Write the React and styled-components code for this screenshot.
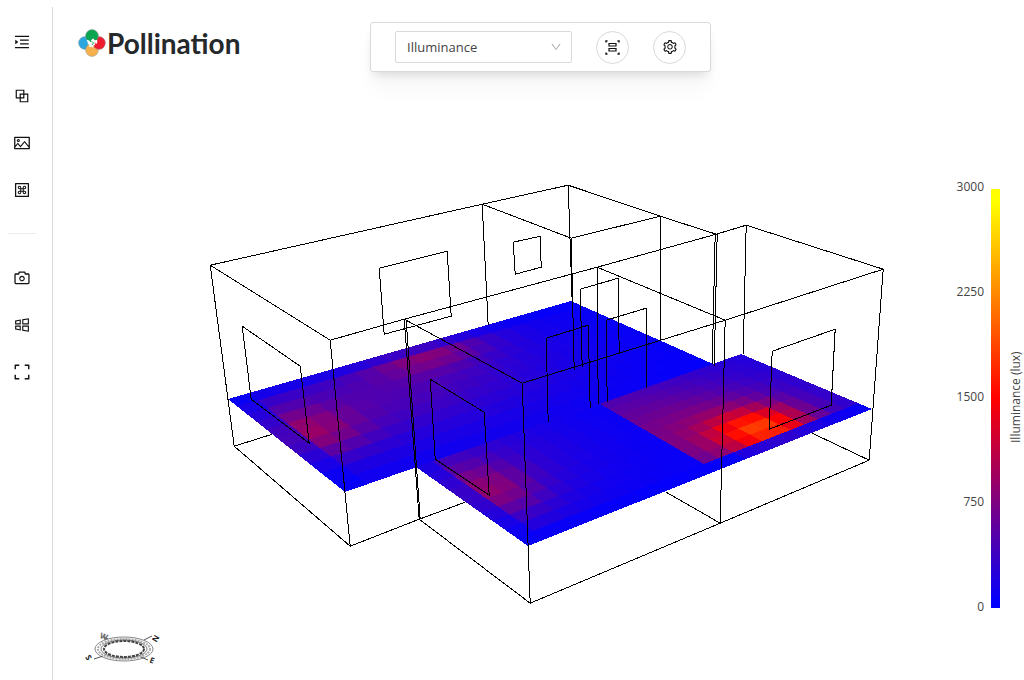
import React, { useState } from 'react';
import styled, { createGlobalStyle } from 'styled-components';
import {
	AiOutlineMenuUnfold,
	AiOutlineBlock,
	AiOutlinePicture,
	AiOutlineMacCommand,
	AiOutlineCamera,
	AiOutlineWindows,
	AiOutlineExpand,
	AiOutlineSetting,
	AiOutlineDown,
} from 'react-icons/ai';

// corners run: origin, end of u, far corner, end of v
const ROOMS = [
	{
		id: 'living',
		corners: [[228, 399], [571, 301], [713, 364], [345, 492]],
		cols: 20,
		rows: 11,
		base: (u, v) => 0.01 + 0.25 * bump(u, v, 0.22, 0.38, 0.28, 0.3),
		spots: [
			[0.38, 0.06, 0.5, 0.08, 0.17],
			[0.34, 0.49, 0.12, 0.11, 0.12],
			[0.08, 0.55, 0.3, 0.25, 0.5],
		],
		dim: (i, j) => (i === 0 ? 0.5 : 1) * (j === 0 ? 0.55 : 1),
	},
	{
		id: 'bedroom',
		corners: [[416, 467], [600, 404], [716, 471], [528, 546]],
		cols: 12,
		rows: 10,
		base: (u, v) => 0.03 + 0.22 * bump(u, v, 0.08, 0.25, 0.38, 0.38),
		spots: [[0.34, 0.14, 0.45, 0.13, 0.2]],
		dim: (i, j, rows) => (i === 0 || j === rows - 1 ? 0.45 : 1),
	},
	{
		id: 'studio',
		corners: [[600, 404], [741, 354], [872, 409], [716, 471]],
		cols: 11,
		rows: 11,
		base: (u, v) => 0.1 + 0.27 * bump(u, v, 0, 0.4, 0.5, 0.5),
		spots: [
			[0.26, 0.4, 0.72, 0.32, 0.28],
			[0.78, 0.46, 0.8, 0.17, 0.15],
		],
		dim: (i, j, rows) => (j === rows - 1 ? (i < 2 ? 0.05 : 0.22) : 1),
	},
];

const EDGES = [
	// ceilings
	'210,265 482,204 568,185 660,216 716,234',
	'210,265 330,340 404,319 597,267 716,234 746,225',
	'746,225 883,269 725,320 522,383 404,319',
	'597,267 725,320',
	'482,204 571,238 660,216',
	// corners
	'210,265 234,446',
	'330,340 350,546',
	'404,319 419,519',
	'406,320 420,519',
	'522,383 530,603',
	'725,320 720,523',
	'883,269 869,460',
	'746,225 743,354',
	'715,234 712,364',
	'717,234 714,366',
	'568,185 572,302',
	'571,238 574,370',
	'660,216 660,341',
	'482,204 488,325',
	'597,267 598,404',
	// ground
	'272,434 234,446 350,546 419,519 465,502',
	'419,519 530,603 720,523 869,460',
	'720,523 666,492',
	'869,460 812,433',
	// doors
	'548,422 546,338 588,325 590,408',
	'582,367 580,289 618,278 619,354',
	'607,402 606,320 646,308 646,388',
	// windows
	'513,242 540,236 541,267 515,274 513,242',
	'379,268 447,251 451,316 384,334 379,268',
	'242,326 300,366 309,443 251,399 242,326',
	'430,379 484,412 489,495 435,459 430,379',
	'772,351 835,329 831,405 769,429 772,351',
];

const TICKS = [3000, 2250, 1500, 750, 0];

function bump(u, v, cu, cv, su, sv) {
	return Math.exp(-(((u - cu) / su) ** 2 + ((v - cv) / sv) ** 2) / 2);
}

// 0 is blue, 1 is red, 2 is yellow
function heat(value) {
	if (value < 1) {
		const r = Math.round(255 * value);
		return `rgb(${r}, 0, ${255 - r})`;
	}
	return `rgb(255, ${Math.round(255 * Math.min(value - 1, 1))}, 0)`;
}

// maps the unit square onto a floor seen in perspective
function project([a, b, c, d]) {
	const dx1 = b[0] - c[0];
	const dx2 = d[0] - c[0];
	const dy1 = b[1] - c[1];
	const dy2 = d[1] - c[1];
	const sx = a[0] - b[0] + c[0] - d[0];
	const sy = a[1] - b[1] + c[1] - d[1];
	const det = dx1 * dy2 - dx2 * dy1;
	const g = (sx * dy2 - dx2 * sy) / det;
	const h = (dx1 * sy - sx * dy1) / det;
	return (u, v) => {
		const w = g * u + h * v + 1;
		const x = (b[0] - a[0] + g * b[0]) * u + (d[0] - a[0] + h * d[0]) * v + a[0];
		const y = (b[1] - a[1] + g * b[1]) * u + (d[1] - a[1] + h * d[1]) * v + a[1];
		return `${(x / w).toFixed(2)},${(y / w).toFixed(2)}`;
	};
}

function Floor({ room }) {
	const { corners, cols, rows, base, spots, dim } = room;
	const at = project(corners);
	const cells = [];
	for (let j = 0; j < rows; j++) {
		for (let i = 0; i < cols; i++) {
			const u = (i + 0.5) / cols;
			const v = (j + 0.5) / rows;
			let value = base(u, v);
			spots.forEach(([power, cu, cv, su, sv]) => {
				value += power * bump(u, v, cu, cv, su, sv);
			});
			cells.push(
				<polygon
					key={`${i}-${j}`}
					fill={heat(value * dim(i, j, rows))}
					points={[
						at(i / cols, j / rows),
						at((i + 1) / cols, j / rows),
						at((i + 1) / cols, (j + 1) / rows),
						at(i / cols, (j + 1) / rows),
					].join(' ')}
				/>
			);
		}
	}
	return <g>{cells}</g>;
}

function Model() {
	return (
		<Scene viewBox='53 0 971 680' role='img' aria-label='Illuminance model'>
			<g shapeRendering='crispEdges'>
				{/* closes the joint between the rooms */}
				<polygon points='417,465 704,366 704,372 417,468' fill='#1c00e3' />
				{ROOMS.map((room) => (
					<Floor key={room.id} room={room} />
				))}
			</g>
			<g
				fill='none'
				stroke='#000'
				strokeWidth='1'
				shapeRendering='crispEdges'
				transform='translate(0.2 0.2)'
			>
				{EDGES.map((points) => (
					<polyline key={points} points={points} />
				))}
			</g>
		</Scene>
	);
}

function PollinationMark() {
	return (
		<svg width='28' height='28' viewBox='0 0 28 28' aria-hidden='true'>
			<g stroke='#8d9599' strokeWidth='0.5'>
				<circle cx='7' cy='14' r='6.400' fill='#2ba6df' />
				<circle cx='14' cy='21' r='6.400' fill='#f5b04c' />
				<circle cx='21' cy='14' r='6.400' fill='#ee1c2e' />
				<circle cx='14' cy='7' r='6.400' fill='#0aa551' />
			</g>
			<path
				d='M9 11.500l2 1-.5 2 2.500-.5-.5 2M11 17.500l2-1 1.500 1 .5-2.500 2 .5M13.500 12.500l1.500-2 1 2 2.500-.5-.5 2.500'
				fill='none'
				stroke='#fff'
				strokeWidth='1.800'
				strokeLinejoin='round'
			/>
			<path d='M12 13.500l3-1.500 2 2-2 2.500-2.500-.5z' fill='#fff' />
			<path d='M14 12.500l1.500 1.500-1.500 2' fill='none' stroke='#0aa551' />
		</svg>
	);
}

function FitIcon() {
	return (
		<svg width='15' height='15' viewBox='0 0 15 15' fill='none' stroke='#111' aria-hidden='true'>
			<path d='M4 3.500h7v2.500h-7zM4 8.500h7v2.500h-7z' strokeWidth='1.200' />
			<path
				d='M1 2.500v-1.500h1.500M12.500 1h1.500v1.500M14 12.500v1.500h-1.500M2.500 14h-1.500v-1.500'
				strokeWidth='1.400'
			/>
		</svg>
	);
}

function CompassRose() {
	return (
		<Compass viewBox='0 0 84 40' role='img' aria-label='Compass'>
			<g fill='none'>
				<ellipse cx='43' cy='19' rx='29' ry='12' stroke='#888' strokeWidth='1' />
				<ellipse cx='43' cy='19' rx='26' ry='10' stroke='#aaa' strokeWidth='2' strokeDasharray='2 1' />
				<ellipse cx='43' cy='19' rx='23' ry='9' stroke='#777' strokeWidth='1' />
				<ellipse cx='43' cy='19' rx='20' ry='8' stroke='#444' strokeWidth='2' strokeDasharray='3 1' />
				<path d='M27 9l-5-2M63 10l8-4M22 26l-9 3M60 27l7 3' stroke='#555' />
			</g>
			<g fill='#222' fontSize='8' fontWeight='700' textAnchor='middle'>
				<text transform='translate(22 9) rotate(20)' fill='#666'>W</text>
				<text transform='translate(77 10) rotate(-60)'>N</text>
				<text transform='translate(5 29) rotate(60)'>S</text>
				<text transform='translate(70 33) rotate(20)'>E</text>
			</g>
		</Compass>
	);
}

export default function App() {
	const [metric, setMetric] = useState('Illuminance');

	return (
		<>
			<GlobalStyle />
			<Page>
				<Sidebar aria-label='Tools'>
					<SideButton aria-label='Expand menu' $head><AiOutlineMenuUnfold /></SideButton>
					<SideButton aria-label='Layers'><AiOutlineBlock /></SideButton>
					<SideButton aria-label='Views'><AiOutlinePicture /></SideButton>
					<SideButton aria-label='Commands'><AiOutlineMacCommand /></SideButton>
					<Divider />
					<SideButton aria-label='Screenshot'><AiOutlineCamera /></SideButton>
					<SideButton aria-label='Split view'><AiOutlineWindows /></SideButton>
					<SideButton aria-label='Full screen'><AiOutlineExpand /></SideButton>
				</Sidebar>
				<Main>
					<Model />
					<Brand href='#'>
						<PollinationMark />
						<span>Pollination</span>
					</Brand>
					<Toolbar>
						<SelectBox>
							<Select
								aria-label='Result'
								value={metric}
								onChange={(e) => setMetric(e.target.value)}
							>
								<option>Illuminance</option>
							</Select>
							<AiOutlineDown />
						</SelectBox>
						<RoundButton aria-label='Fit to view'><FitIcon /></RoundButton>
						<RoundButton aria-label='Settings'><AiOutlineSetting /></RoundButton>
					</Toolbar>
					<Legend>
						<Ticks>
							{TICKS.map((tick) => (
								<span key={tick}>{tick}</span>
							))}
						</Ticks>
						<Scale />
						<LegendTitle>Illuminance (lux)</LegendTitle>
					</Legend>
					<CompassRose />
				</Main>
			</Page>
		</>
	);
}

const GlobalStyle = createGlobalStyle`
	* {
		box-sizing: border-box;
	}
	body {
		margin: 0;
		background: #fff;
		color: #444;
		font-family: 'Open Sans', 'Noto Sans', sans-serif;
	}
`;
const Page = styled.div`
	display: flex;
	min-height: 100vh;
`;
const Sidebar = styled.nav`
	display: flex;
	flex-direction: column;
	flex: none;
	width: 53px;
	margin-top: 7px;
	padding: 11px 8px 0 0;
	border-right: 1px solid #d9d9d9;
`;
const SideButton = styled.button`
	display: flex;
	align-items: center;
	justify-content: center;
	height: 47px;
	margin-bottom: ${({ $head }) => ($head ? '7px' : '0')};
	padding: 0;
	border: 0;
	background: none;
	color: #111;
	font-size: 18px;
	cursor: pointer;
`;
const Divider = styled.hr`
	width: 28px;
	height: 1px;
	margin: 20px 8px;
	border: 0;
	background: #ececec;
`;
const Main = styled.main`
	position: relative;
	flex: 1;
	display: flex;
	justify-content: center;
	align-items: flex-start;
	padding: 22px 0 0 4px;
`;
const Scene = styled.svg`
	position: absolute;
	inset: 0;
	width: 100%;
	height: 100%;
`;
const Brand = styled.a`
	position: absolute;
	left: 25px;
	top: 29px;
	display: flex;
	align-items: center;
	gap: 1px;
	height: 28px;
	color: #25292b;
	font-family: Lato, sans-serif;
	font-size: 28px;
	font-weight: 700;
	line-height: 28px;
	text-decoration: none;
`;
const Toolbar = styled.div`
	position: relative;
	display: flex;
	align-items: center;
	gap: 24px;
	height: 50px;
	padding: 0 24px;
	border: 1px solid #d9d9d9;
	border-radius: 3px;
	background: #fff;
	box-shadow: 0 6px 10px -4px rgba(0, 0, 0, 0.14),
		0 20px 20px -2px rgba(0, 0, 0, 0.03);
`;
const SelectBox = styled.div`
	position: relative;
	width: 177px;
	svg {
		position: absolute;
		right: 10px;
		top: 10px;
		color: #aaa;
		font-size: 12px;
		pointer-events: none;
	}
`;
const Select = styled.select`
	display: block;
	width: 100%;
	height: 32px;
	padding: 0 11px;
	appearance: none;
	border: 1px solid #d9d9d9;
	border-radius: 2px;
	background: #fff;
	color: #444;
	font-family: inherit;
	font-size: 13px;
`;
const RoundButton = styled.button`
	display: flex;
	align-items: center;
	justify-content: center;
	width: 33px;
	height: 33px;
	padding: 0;
	border: 1px solid #d9d9d9;
	border-radius: 50%;
	background: #fff;
	color: #111;
	font-size: 16px;
	cursor: pointer;
`;
const Legend = styled.div`
	position: absolute;
	top: 181px;
	right: 1px;
	bottom: 67px;
	display: flex;
	font-size: 12px;
	line-height: 12px;
`;
const Ticks = styled.div`
	display: flex;
	flex-direction: column;
	justify-content: space-between;
	text-align: right;
`;
const Scale = styled.div`
	width: 9px;
	margin: 8px 9px 5px 7px;
	background: linear-gradient(to top, #00f 1%, #f00 50%, #ff0 97%);
`;
const LegendTitle = styled.div`
	writing-mode: vertical-rl;
	transform: rotate(180deg);
	text-align: center;
	line-height: 14px;
`;
const Compass = styled.svg`
	position: absolute;
	left: 28px;
	bottom: 10px;
	width: 84px;
	height: 40px;
`;
